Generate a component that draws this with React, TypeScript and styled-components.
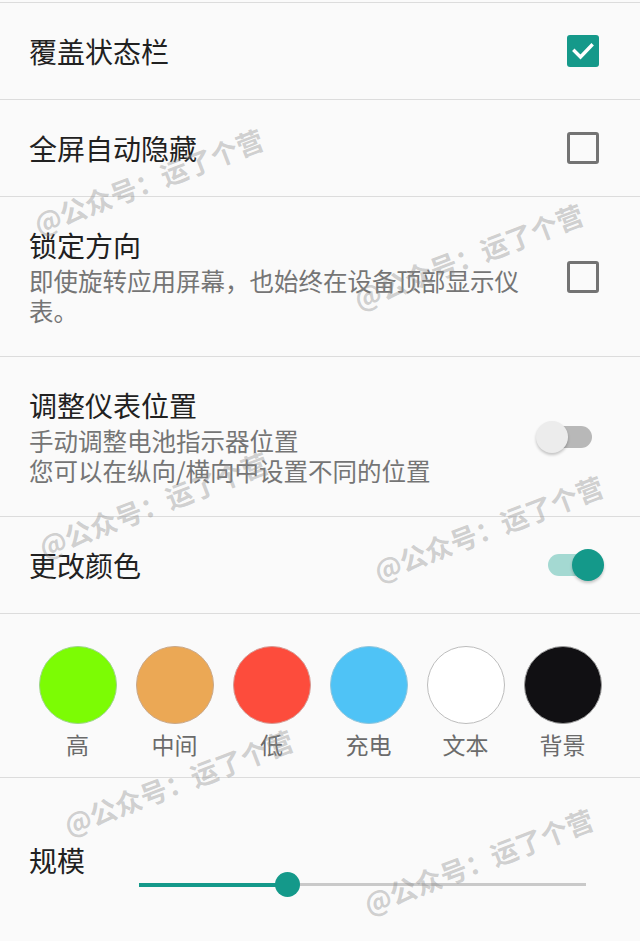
import React, { useState } from 'react';
import styled, { createGlobalStyle } from 'styled-components';

const GlobalStyle = createGlobalStyle`
  body {
    margin: 0;
    background: #fafafa;
    font-family: 'Noto Sans CJK SC', 'Noto Sans', sans-serif;
  }
`;

type ColorOption = { label: string; color: string; border: string };

const colorOptions: ColorOption[] = [
  { label: '高', color: '#7cfc04', border: '#9dd58a' },
  { label: '中间', color: '#eba855', border: '#c9a88a' },
  { label: '低', color: '#fd4c3c', border: '#d79a94' },
  { label: '充电', color: '#4fc3f6', border: '#8fc5dc' },
  { label: '文本', color: '#ffffff', border: '#bdbdbd' },
  { label: '背景', color: '#111013', border: '#9a9a9a' },
];

const watermarks = [
  { x: 35, y: 225 },
  { x: 355, y: 300 },
  { x: 40, y: 548 },
  { x: 375, y: 572 },
  { x: 65, y: 826 },
  { x: 365, y: 905 },
];

const Checkbox = ({ checked }: { checked: boolean }) => (
  <S.Checkbox $checked={checked}>
    {checked && (
      <svg width="26" height="26" viewBox="0 0 26 26">
        <polyline
          points="4.5,13 10.5,19 21.5,7.5"
          fill="none"
          stroke="white"
          strokeWidth="3.4"
          strokeLinecap="square"
        />
      </svg>
    )}
  </S.Checkbox>
);

const Switch = ({ on }: { on: boolean }) => (
  <S.Switch>
    <S.SwitchTrack $on={on} />
    <S.SwitchThumb $on={on} />
  </S.Switch>
);

const App = () => {
  const [scale] = useState(33.3);

  return (
    <>
      <GlobalStyle />
      <S.Page>
        <S.Row>
          <S.TextBlock>
            <S.Title>覆盖状态栏</S.Title>
          </S.TextBlock>
          <S.Control>
            <Checkbox checked />
          </S.Control>
        </S.Row>

        <S.Row>
          <S.TextBlock>
            <S.Title>全屏自动隐藏</S.Title>
          </S.TextBlock>
          <S.Control>
            <Checkbox checked={false} />
          </S.Control>
        </S.Row>

        <S.Row>
          <S.TextBlock>
            <S.Title>锁定方向</S.Title>
            <S.Summary>即使旋转应用屏幕，也始终在设备顶部显示仪表。</S.Summary>
          </S.TextBlock>
          <S.Control>
            <Checkbox checked={false} />
          </S.Control>
        </S.Row>

        <S.Row>
          <S.TextBlock>
            <S.Title>调整仪表位置</S.Title>
            <S.Summary>
              手动调整电池指示器位置
              <br />
              您可以在纵向/横向中设置不同的位置
            </S.Summary>
          </S.TextBlock>
          <S.Control>
            <Switch on={false} />
          </S.Control>
        </S.Row>

        <S.Row>
          <S.TextBlock>
            <S.Title>更改颜色</S.Title>
          </S.TextBlock>
          <S.Control>
            <Switch on />
          </S.Control>
        </S.Row>

        <S.ColorRow>
          {colorOptions.map((option) => (
            <S.ColorItem key={option.label}>
              <S.Swatch $color={option.color} $border={option.border} />
              <S.ColorLabel>{option.label}</S.ColorLabel>
            </S.ColorItem>
          ))}
        </S.ColorRow>

        <S.SliderRow>
          <S.Title>规模</S.Title>
          <S.Slider>
            <S.SliderTrack />
            <S.SliderFill style={{ width: `${scale}%` }} />
            <S.SliderThumb style={{ left: `${scale}%` }} />
          </S.Slider>
        </S.SliderRow>

        {watermarks.map((mark, index) => (
          <S.Watermark key={index} $x={mark.x} $y={mark.y}>
            @公众号：运了个营
          </S.Watermark>
        ))}
      </S.Page>
    </>
  );
};

export default App;

const S = {
  Page: styled.div`
    position: relative;
    width: 640px;
    height: 941px;
    padding-top: 2px;
    box-sizing: border-box;
    overflow: hidden;

    background: #fafafa;
  `,

  Row: styled.div`
    display: flex;
    align-items: center;

    padding: 30px 0 30px 29px;

    border-top: 1px solid #dcdcdc;
  `,

  TextBlock: styled.div`
    flex: 1;
    display: flex;
    flex-direction: column;
    min-height: 36px;
  `,

  Title: styled.div`
    font-size: 28px;
    line-height: 36px;
    color: #212121;
  `,

  Summary: styled.div`
    margin-top: 3px;

    font-size: 24.5px;
    line-height: 30px;
    color: #757575;
  `,

  Control: styled.div`
    display: flex;
    justify-content: flex-end;
    flex-shrink: 0;

    width: 110px;
  `,

  Checkbox: styled.div<{ $checked: boolean }>`
    display: flex;
    justify-content: center;
    align-items: center;

    width: 32px;
    height: 32px;
    margin-right: 41px;
    box-sizing: border-box;
    border-radius: 3px;
    border: ${({ $checked }) => ($checked ? 'none' : '3px solid #737373')};

    background: ${({ $checked }) => ($checked ? '#15998a' : 'transparent')};
  `,

  Switch: styled.div`
    position: relative;

    width: 68px;
    height: 34px;
    margin-right: 36px;
  `,

  SwitchTrack: styled.div<{ $on: boolean }>`
    position: absolute;
    left: 12px;
    top: 6px;

    width: 44px;
    height: 22px;
    border-radius: 11px;

    background: ${({ $on }) => ($on ? '#a4d9d2' : '#b8b8b8')};
  `,

  SwitchThumb: styled.div<{ $on: boolean }>`
    position: absolute;
    top: 1px;
    left: ${({ $on }) => ($on ? '36px' : '0')};

    width: 32px;
    height: 32px;
    border-radius: 50%;

    background: ${({ $on }) => ($on ? '#14998a' : '#ececec')};
    box-shadow: 0 2px 3px rgba(0, 0, 0, 0.22);
  `,

  ColorRow: styled.div`
    display: grid;
    grid-template-columns: repeat(6, 97px);

    padding: 32px 0 18px 29px;

    border-top: 1px solid #dcdcdc;
  `,

  ColorItem: styled.div`
    display: flex;
    flex-direction: column;
    align-items: center;
    gap: 5px;
  `,

  Swatch: styled.div<{ $color: string; $border: string }>`
    width: 78px;
    height: 78px;
    box-sizing: border-box;
    border-radius: 50%;
    border: 1.5px solid ${({ $border }) => $border};

    background: ${({ $color }) => $color};
  `,

  ColorLabel: styled.div`
    font-size: 23px;
    line-height: 30px;
    color: #6b6b6b;
  `,

  SliderRow: styled.div`
    display: flex;
    flex-direction: column;

    height: 164px;
    padding: 64px 54px 0 29px;
    box-sizing: border-box;

    border-top: 1px solid #dcdcdc;
  `,

  Slider: styled.div`
    position: relative;

    height: 24px;
    margin: -6px 0 0 110px;
  `,

  SliderTrack: styled.div`
    position: absolute;
    left: 0;
    right: 0;
    top: 11px;

    height: 3px;

    background: #c9c9c9;
  `,

  SliderFill: styled.div`
    position: absolute;
    left: 0;
    top: 10.5px;

    height: 4px;

    background: #14998a;
  `,

  SliderThumb: styled.div`
    position: absolute;
    top: 0;

    width: 25px;
    height: 25px;
    margin-left: -12.5px;
    border-radius: 50%;

    background: #14998a;
  `,

  Watermark: styled.div<{ $x: number; $y: number }>`
    position: absolute;
    left: ${({ $x }) => $x}px;
    top: ${({ $y }) => $y - 14}px;

    font-size: 27px;
    font-weight: 700;
    line-height: 28px;
    white-space: nowrap;
    color: rgba(140, 140, 140, 0.4);

    transform: rotate(-21deg);
    transform-origin: 0 50%;
    pointer-events: none;
  `,
};
